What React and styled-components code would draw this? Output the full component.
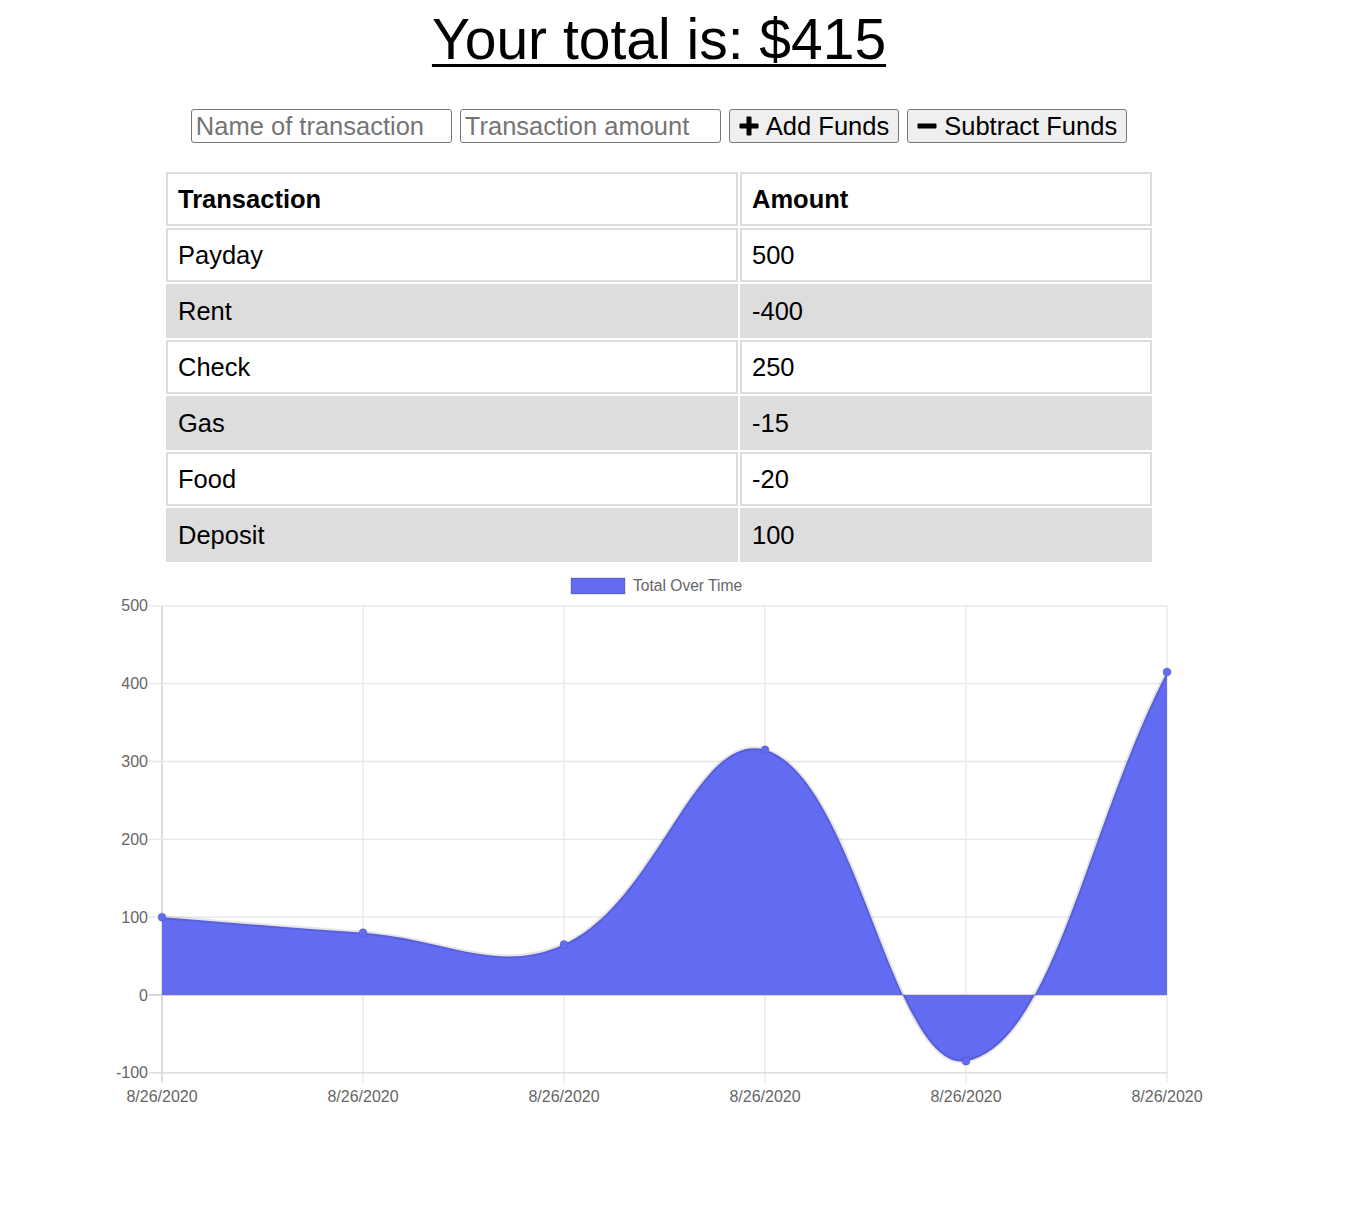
import React from "react";
import styled, { createGlobalStyle } from "styled-components";

const Global = createGlobalStyle`
  html, body { margin: 0; padding: 0; background: #fff; }
  body { font-family: "Liberation Sans", Arial, sans-serif; color: #000; }
`;

const Page = styled.div`
  width: 1318px;
  display: flex;
  flex-direction: column;
  align-items: center;
`;

const Title = styled.h1`
  margin: 0;
  padding-top: 6px;
  font-size: 57px;
  line-height: 66px;
  font-weight: normal;
  text-decoration: underline;
  text-decoration-thickness: 3px;
  text-underline-offset: 5px;
`;

const Form = styled.form`
  margin-top: 37px;
  display: flex;
  gap: 8px;
  align-items: center;
`;

const Input = styled.input`
  box-sizing: border-box;
  width: 261px;
  height: 34px;
  padding: 1px 4px;
  border: 1px solid #767676;
  border-radius: 3px;
  font-family: "Liberation Sans", Arial, sans-serif;
  font-size: 25.5px;
  outline: none;
  &::placeholder { color: #757575; }
`;

const Button = styled.button`
  box-sizing: border-box;
  height: 34px;
  padding: 0 9px;
  display: flex;
  align-items: center;
  gap: 7px;
  background: #efefef;
  border: 1px solid #767676;
  border-radius: 3px;
  font-family: "Liberation Sans", Arial, sans-serif;
  font-size: 25.5px;
  color: #000;
`;

const Table = styled.table`
  margin-top: 27px;
  width: 990px;
  table-layout: fixed;
  border-collapse: separate;
  border-spacing: 2px;
`;

const Cell = styled.td`
  box-sizing: border-box;
  width: ${(p) => p.$w}px;
  height: 54px;
  padding: 10px 10px;
  line-height: 30px;
  font-size: 25.5px;
  text-align: left;
  font-weight: ${(p) => (p.$head ? "bold" : "normal")};
  border: 2px solid #dddddd;
  background: ${(p) => (p.$grey ? "#dddddd" : "#ffffff")};
`;

const ChartBox = styled.div`
  width: 1318px;
  height: 560px;
`;

const PlusIcon = () => (
  <svg width="20" height="20" viewBox="0 0 20 20">
    <rect x="0.5" y="7.5" width="19" height="5" rx="1" fill="#000" />
    <rect x="7.5" y="0.5" width="5" height="19" rx="1" fill="#000" />
  </svg>
);

const MinusIcon = () => (
  <svg width="20" height="20" viewBox="0 0 20 20">
    <rect x="0.5" y="7.5" width="19" height="5" rx="1" fill="#000" />
  </svg>
);

const rows = [
  ["Payday", "500"],
  ["Rent", "-400"],
  ["Check", "250"],
  ["Gas", "-15"],
  ["Food", "-20"],
  ["Deposit", "100"],
];

const FILL = "#636bf2";
const vals = [100, 80, 65, 315, -85, 415];
const X0 = 162;
const DX = 201;
const Y0 = 995;
const K = 467 / 600;
const TOP = 606;
const BOT = 1073;
const RIGHT = X0 + DX * 5;

function buildPath() {
  const pts = vals.map((v, i) => ({ x: X0 + i * DX, y: Y0 - v * K }));
  const clamp = (v, a, b) => Math.max(a, Math.min(b, v));
  const cps = pts.map((cur, i) => {
    const prev = pts[i - 1] || cur;
    const next = pts[i + 1] || cur;
    const d01 = Math.hypot(cur.x - prev.x, cur.y - prev.y);
    const d12 = Math.hypot(next.x - cur.x, next.y - cur.y);
    let s01 = d01 / (d01 + d12);
    let s12 = d12 / (d01 + d12);
    if (isNaN(s01)) s01 = 0;
    if (isNaN(s12)) s12 = 0;
    const fa = 0.4 * s01;
    const fb = 0.4 * s12;
    return {
      px: clamp(cur.x - fa * (next.x - prev.x), X0, RIGHT),
      py: clamp(cur.y - fa * (next.y - prev.y), TOP, BOT),
      nx: clamp(cur.x + fb * (next.x - prev.x), X0, RIGHT),
      ny: clamp(cur.y + fb * (next.y - prev.y), TOP, BOT),
    };
  });
  let d = `M ${pts[0].x} ${pts[0].y}`;
  for (let i = 1; i < pts.length; i++) {
    d += ` C ${cps[i - 1].nx} ${cps[i - 1].ny} ${cps[i].px} ${cps[i].py} ${pts[i].x} ${pts[i].y}`;
  }
  return { d, pts };
}

const Chart = () => {
  const { d, pts } = buildPath();
  const yTicks = [500, 400, 300, 200, 100, 0, -100];
  return (
    <ChartBox>
      <svg width="1318" height="560" viewBox="0 564 1318 560">
        {/* legend */}
        <rect x="571" y="578" width="54" height="16" fill={FILL} stroke="rgba(0,0,0,0.1)" strokeWidth="2" />
        <text x="633" y="590.5" fontSize="15.6" fill="#666" fontFamily="Liberation Sans, Arial, sans-serif">
          Total Over Time
        </text>
        {/* vertical grid */}
        {pts.map((p, i) => (
          <line key={"v" + i} x1={p.x} y1={TOP} x2={p.x} y2={BOT + 10} stroke={i === 0 ? "#c9c9c9" : "#e6e6e6"} strokeWidth="1.3" />
        ))}
        {/* horizontal grid */}
        {yTicks.map((t) => {
          const y = Y0 - t * K;
          const c = t === 0 ? "#c9c9c9" : t === -100 ? "#d6d6d6" : "#e6e6e6";
          return <line key={"h" + t} x1={X0 - 13} y1={y} x2={RIGHT} y2={y} stroke={c} strokeWidth="1.3" />;
        })}
        {/* fill */}
        <path d={`${d} L ${RIGHT} ${Y0} L ${X0} ${Y0} Z`} fill={FILL} />
        <path d={d} fill="none" stroke="rgba(0,0,0,0.1)" strokeWidth="4" />
        {pts.map((p, i) => (
          <circle key={"p" + i} cx={p.x} cy={p.y} r="4" fill={FILL} stroke="rgba(0,0,0,0.1)" strokeWidth="1.3" />
        ))}
        {/* y labels */}
        {yTicks.map((t) => (
          <text
            key={"yl" + t}
            x="148"
            y={Y0 - t * K + 5.6}
            textAnchor="end"
            fontSize="16"
            fill="#666"
            fontFamily="Liberation Sans, Arial, sans-serif"
          >
            {t}
          </text>
        ))}
        {/* x labels */}
        {pts.map((p, i) => (
          <text
            key={"xl" + i}
            x={p.x}
            y="1102"
            textAnchor="middle"
            fontSize="16"
            fill="#666"
            fontFamily="Liberation Sans, Arial, sans-serif"
          >
            8/26/2020
          </text>
        ))}
      </svg>
    </ChartBox>
  );
};

export default function App() {
  return (
    <>
      <Global />
      <Page>
        <Title>Your total is: $415</Title>
        <Form onSubmit={(e) => e.preventDefault()}>
          <Input type="text" placeholder="Name of transaction" />
          <Input type="number" placeholder="Transaction amount" />
          <Button type="button">
            <PlusIcon />
            Add Funds
          </Button>
          <Button type="button">
            <MinusIcon />
            Subtract Funds
          </Button>
        </Form>
        <Table>
          <thead>
            <tr>
              <Cell as="th" $head $w={572}>Transaction</Cell>
              <Cell as="th" $head $w={412}>Amount</Cell>
            </tr>
          </thead>
          <tbody>
            {rows.map(([name, amt], i) => (
              <tr key={name}>
                <Cell $w={572} $grey={i % 2 === 1}>{name}</Cell>
                <Cell $w={412} $grey={i % 2 === 1}>{amt}</Cell>
              </tr>
            ))}
          </tbody>
        </Table>
        <Chart />
      </Page>
    </>
  );
}
